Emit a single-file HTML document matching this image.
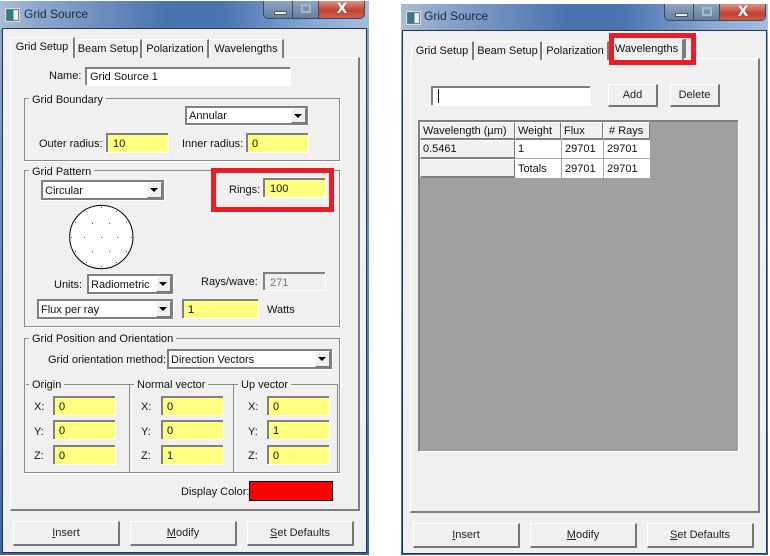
<!DOCTYPE html>
<html><head><meta charset="utf-8"><style>
html,body{margin:0;padding:0;background:#fff}
body{width:770px;height:556px;overflow:hidden;position:relative;font:11px "Liberation Sans",sans-serif;color:#111}
div{position:absolute;box-sizing:border-box}
.win{left:0;top:0;width:369px;height:554px;background:linear-gradient(90deg,#a9bdd8 0,#8ea8cc 10%,#4a74b0 45%,#4a74b0 60%,#8aa9d4 85%,#a4bde0 100%)}
.win:after{content:"";position:absolute;left:0;right:0;bottom:0;top:28px;background:linear-gradient(180deg,#8aa6cc,#6f90c0 30%,#3d66a6)}
.cl{left:2px;top:27px;width:365px;height:525px;background:#f0f0f0;border:1px solid #25344f;z-index:1}
.t{white-space:nowrap;line-height:14px;z-index:3;margin-top:1px}
.ti{font-size:12px;z-index:3;left:24px;top:5px;color:#1a2a40;line-height:16px;white-space:nowrap}
.ic{left:6px;top:8px;width:13px;height:12px;background:linear-gradient(90deg,#2f7f7f 60%,#eee 60%);border:1px solid #777;outline:1px solid #ddd;z-index:3}
.cb{left:263px;top:0;height:18px;width:102px;border:1px solid #3b4a60;border-top:0;border-radius:0 0 5px 5px;overflow:hidden;z-index:3;background:linear-gradient(180deg,#8fa4c2,#64809f)}
.cx{left:55px;top:0;width:46px;height:17px;background:linear-gradient(180deg,#d9968a 0,#c4402e 55%,#d0604a 100%);color:#fff;text-align:center;font:bold 14px/17px "DejaVu Sans",sans-serif;text-shadow:0 0 1px #333}
.mn{left:10px;top:10px;width:13px;height:4px;background:#eee;border:1px solid #556}
.mx{left:37px;top:3px;width:10px;height:9px;border:2px solid #a9b8cc}
.sep{left:28px;top:0;width:1px;height:17px;background:#3b4a60}
.panel{left:10px;top:57px;width:350px;height:454px;background:#f0f0f0;border:1px solid #fff;border-right:2px solid #7d7d7d;border-bottom:2px solid #7d7d7d;z-index:2}
.tab{height:19px;background:#f0f0f0;border-top:1px solid #fff;border-left:1px solid #fff;border-right:2px solid #7d7d7d;text-align:center;line-height:18px;z-index:3;white-space:nowrap}
.tab.on{height:21px;z-index:4}
.gb{border:1px solid #8a8a8a;box-shadow:1px 1px 0 #fff;z-index:3}
.gl{background:#f0f0f0;padding:0 3px;z-index:4;line-height:13px;white-space:nowrap;margin-top:1px}
.in{background:#fff;border-top:2px solid #808080;border-left:2px solid #808080;box-shadow:1px 1px 0 #fff;z-index:4;padding:3px 0 0 4px;line-height:13px;white-space:nowrap}
.y{background:#ffff80}
.dis{background:#f0f0f0;color:#777}
.ar{right:0;top:0;bottom:0;width:15px;background:#f0f0f0;border-left:1px solid #fff;border-top:1px solid #fff;border-right:1px solid #777;border-bottom:1px solid #777}
.ar:after{content:"";position:absolute;left:2px;top:5px;border:4px solid transparent;border-top:4px solid #000;border-bottom:0}
.combo{padding-left:2px;padding-top:3px;border:2px solid #808080}
.btn{background:#f0f0f0;border-top:1px solid #fff;border-left:1px solid #fff;border-right:2px solid #777;border-bottom:2px solid #777;text-align:center;line-height:22px;z-index:3;height:25px;width:107px;color:#222}
u{text-decoration:underline}
.red{border:5px solid #ed1c24;z-index:6}
.cell{background:#fff;padding:0 0 0 3px;line-height:17px;z-index:5;white-space:nowrap}
.hd{background:#f0f0f0;border-right:1px solid #777;border-bottom:2px solid #808080;border-top:1px solid #fff;border-left:1px solid #fff;padding-left:2px;line-height:16px;z-index:5;white-space:nowrap}
</style></head><body>

<!-- LEFT WINDOW -->
<div style="left:0;top:1px;width:369px;height:554px">
<div class="win"></div>
<div class="ic"></div><div class="ti">Grid Source</div>
<div class="cb"><div class="mn"></div><div class="sep"></div><div class="mx"></div><div class="sep" style="left:54px"></div><div class="cx">X</div></div>
<div class="cl"></div>
</div>

<div class="panel"></div>
<div class="tab on" style="left:10px;top:37px;width:65px">Grid Setup</div>
<div class="tab" style="left:75px;top:39px;width:67px">Beam Setup</div>
<div class="tab" style="left:142px;top:39px;width:67px">Polarization</div>
<div class="tab" style="left:209px;top:39px;width:75px">Wavelengths</div>

<div class="t" style="left:49px;top:68px">Name:</div>
<div class="in" style="left:85px;top:67px;width:205px;height:18px;padding-top:2px;padding-left:3px">Grid Source 1</div>

<div class="gb" style="left:24px;top:98px;width:316px;height:63px"></div>
<div class="gl" style="left:29px;top:93px">Grid Boundary</div>
<div class="in combo" style="left:185px;top:106px;width:123px;height:19px;padding-top:2px">Annular<div class="ar"></div></div>
<div class="t" style="left:39px;top:136px">Outer radius:</div>
<div class="in y" style="left:106px;top:133px;width:62px;height:19px;padding-left:5px">10</div>
<div class="t" style="left:182px;top:136px">Inner radius:</div>
<div class="in y" style="left:246px;top:133px;width:62px;height:19px">0</div>

<div class="gb" style="left:24px;top:170px;width:316px;height:157px"></div>
<div class="gl" style="left:29px;top:165px">Grid Pattern</div>
<div class="in combo" style="left:41px;top:180px;width:123px;height:20px">Circular<div class="ar"></div></div>
<div class="red" style="left:211px;top:168px;width:123px;height:44px"></div>
<div class="t" style="left:229px;top:182px">Rings:</div>
<div class="in y" style="left:263px;top:178px;width:62px;height:19px;padding-left:5px">100</div>

<svg style="position:absolute;left:0;top:165px;z-index:5" width="385" height="170" viewBox="0 0 1155 510" shape-rendering="geometricPrecision">
<circle cx="304" cy="216" r="95" fill="#fff" stroke="#000" stroke-width="3"/>
<g fill="#f00" shape-rendering="crispEdges">
<rect x="303" y="126" width="3" height="3"/><rect x="258" y="138" width="3" height="3"/><rect x="348" y="138" width="3" height="3"/>
<rect x="225" y="171" width="3" height="3"/><rect x="276" y="174" width="3" height="3"/><rect x="327" y="174" width="3" height="3"/><rect x="378" y="171" width="3" height="3"/>
<rect x="213" y="216" width="3" height="3"/><rect x="252" y="216" width="3" height="3"/><rect x="303" y="216" width="3" height="3"/><rect x="351" y="216" width="3" height="3"/><rect x="393" y="216" width="3" height="3"/>
<rect x="225" y="258" width="3" height="3"/><rect x="276" y="258" width="3" height="3"/><rect x="327" y="258" width="3" height="3"/><rect x="378" y="258" width="3" height="3"/>
<rect x="258" y="291" width="3" height="3"/><rect x="348" y="291" width="3" height="3"/><rect x="303" y="303" width="3" height="3"/>
</g></svg>

<div class="t" style="left:54px;top:277px">Units:</div>
<div class="in combo" style="left:87px;top:274px;width:86px;height:20px">Radiometric<div class="ar"></div></div>
<div class="t" style="left:201px;top:274px">Rays/wave:</div>
<div class="in dis" style="left:263px;top:272px;width:62px;height:18px;padding-left:5px">271</div>
<div class="in combo" style="left:37px;top:299px;width:136px;height:20px">Flux per ray<div class="ar"></div></div>
<div class="in y" style="left:182px;top:299px;width:76px;height:19px">1</div>
<div class="t" style="left:267px;top:302px">Watts</div>

<div class="gb" style="left:24px;top:338px;width:316px;height:135px"></div>
<div class="gl" style="left:29px;top:332px">Grid Position and Orientation</div>
<div class="t" style="left:48px;top:352px">Grid orientation method:</div>
<div class="in combo" style="left:167px;top:349px;width:165px;height:20px">Direction Vectors<div class="ar"></div></div>

<div class="gb" style="left:26px;top:384px;width:104px;height:89px;border-bottom:0;border-left:0;box-shadow:none"></div>
<div class="gb" style="left:129px;top:384px;width:105px;height:89px;border-bottom:0;border-left:0;box-shadow:none"></div>
<div class="gb" style="left:233px;top:384px;width:105px;height:89px;border-bottom:0;border-left:0;box-shadow:none"></div>
<div class="gl" style="left:29px;top:378px;padding:0 3px">Origin</div>
<div class="gl" style="left:134px;top:378px">Normal vector</div>
<div class="gl" style="left:238px;top:378px">Up vector</div>

<div class="t" style="left:34px;top:399px">X:</div><div class="t" style="left:34px;top:424px">Y:</div><div class="t" style="left:34px;top:448px">Z:</div>
<div class="t" style="left:141px;top:399px">X:</div><div class="t" style="left:141px;top:424px">Y:</div><div class="t" style="left:141px;top:448px">Z:</div>
<div class="t" style="left:248px;top:399px">X:</div><div class="t" style="left:248px;top:424px">Y:</div><div class="t" style="left:248px;top:448px">Z:</div>

<div class="in y" style="left:53px;top:396px;width:62px;height:19px">0</div>
<div class="in y" style="left:53px;top:420px;width:62px;height:19px">0</div>
<div class="in y" style="left:53px;top:445px;width:62px;height:19px">0</div>
<div class="in y" style="left:161px;top:396px;width:62px;height:19px">0</div>
<div class="in y" style="left:161px;top:420px;width:62px;height:19px">0</div>
<div class="in y" style="left:161px;top:445px;width:62px;height:19px">1</div>
<div class="in y" style="left:267px;top:396px;width:62px;height:19px">0</div>
<div class="in y" style="left:267px;top:420px;width:62px;height:19px">1</div>
<div class="in y" style="left:267px;top:445px;width:62px;height:19px">0</div>

<div class="t" style="left:181px;top:484px">Display Color:</div>
<div style="left:249px;top:481px;width:84px;height:20px;background:#f00;border:1px solid #000;z-index:4"></div>

<div class="btn" style="left:13px;top:521px"><u>I</u>nsert</div>
<div class="btn" style="left:130px;top:521px"><u>M</u>odify</div>
<div class="btn" style="left:247px;top:521px"><u>S</u>et Defaults</div>

<!-- RIGHT WINDOW -->
<div style="left:401px;top:4px;width:369px;height:552px;overflow:hidden">
<div class="win" style="width:367px;height:551px"></div>
<div class="ic" style="left:6px;top:8px"></div><div class="ti" style="left:23px;top:4px">Grid Source</div>
<div class="cb" style="left:263px;top:0;height:17px"><div class="mn" style="top:9px"></div><div class="sep"></div><div class="mx"></div><div class="sep" style="left:54px"></div><div class="cx">X</div></div>
<div class="cl" style="left:1px;top:26px;width:365px;height:524px"></div>
</div>

<div class="panel" style="left:410px;top:58px;height:455px"></div>
<div class="tab" style="left:411px;top:41px;width:63px">Grid Setup</div>
<div class="tab" style="left:474px;top:41px;width:68px">Beam Setup</div>
<div class="tab" style="left:542px;top:41px;width:67px">Polarization</div>
<div class="tab on" style="left:610px;top:39px;width:74px">Wavelengths</div>
<div style="left:684px;top:39px;width:2px;height:19px;background:#7d7d7d;z-index:4"></div>
<div class="red" style="left:609px;top:33px;width:87px;height:32px"></div>

<div class="in" style="left:431px;top:86px;width:159px;height:19px"><div style="left:5px;top:1px;width:1px;height:14px;background:#000"></div></div>
<div class="btn" style="left:608px;top:84px;width:50px;height:23px;line-height:20px">Add</div>
<div class="btn" style="left:670px;top:84px;width:50px;height:23px;line-height:20px">Delete</div>

<div style="left:418px;top:120px;width:320px;height:331px;background:#a0a0a0;border-top:2px solid #808080;border-left:2px solid #808080;box-shadow:1px 1px 0 #fff;z-index:4"></div>
<div class="hd" style="left:420px;top:122px;width:95px;height:18px">Wavelength (µm)</div>
<div class="hd" style="left:515px;top:122px;width:46px;height:18px">Weight</div>
<div class="hd" style="left:561px;top:122px;width:42px;height:18px">Flux</div>
<div class="hd" style="left:603px;top:122px;width:47px;height:18px">&nbsp;# Rays</div>
<div class="hd" style="left:420px;top:140px;width:95px;height:19px">0.5461</div>
<div class="hd" style="left:420px;top:159px;width:95px;height:19px"></div>
<div class="cell" style="left:515px;top:140px;width:46px;height:19px;line-height:18px">1</div>
<div class="cell" style="left:561px;top:140px;width:42px;height:19px;line-height:18px;border-left:1px solid #aaa">29701</div>
<div class="cell" style="left:603px;top:140px;width:47px;height:19px;line-height:18px;border-left:1px solid #aaa">29701</div>
<div class="cell" style="left:515px;top:158px;width:46px;height:20px;line-height:20px;border-top:1px solid #aaa">Totals</div>
<div class="cell" style="left:561px;top:158px;width:42px;height:20px;line-height:20px;border-top:1px solid #aaa;border-left:1px solid #aaa">29701</div>
<div class="cell" style="left:603px;top:158px;width:47px;height:20px;line-height:20px;border-top:1px solid #aaa;border-left:1px solid #aaa">29701</div>

<div class="btn" style="left:413px;top:523px"><u>I</u>nsert</div>
<div class="btn" style="left:530px;top:523px"><u>M</u>odify</div>
<div class="btn" style="left:647px;top:523px"><u>S</u>et Defaults</div>

</body></html>
